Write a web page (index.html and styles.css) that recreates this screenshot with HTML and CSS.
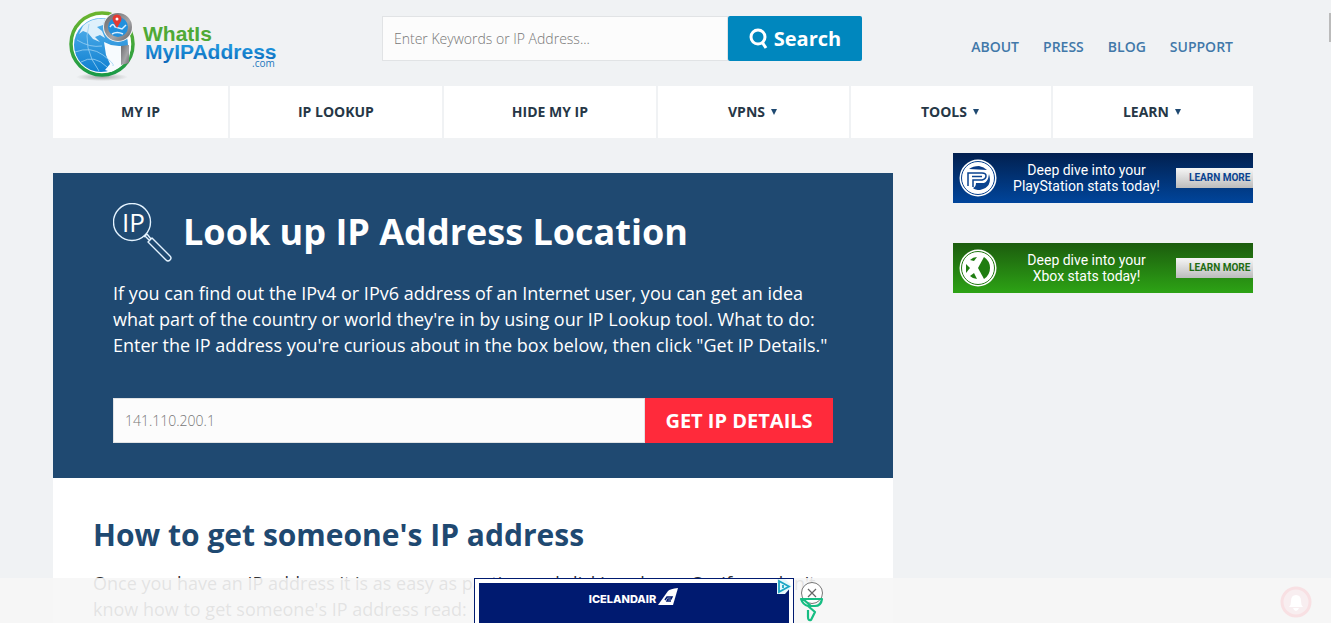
FILE: index.html
```html
<!DOCTYPE html>
<html lang="en">
<head>
<meta charset="utf-8">
<title>IP Address Lookup</title>
<link rel="stylesheet" href="styles.css">
</head>
<body>
<div class="page">
  <header class="header">
    <a class="logo" href="#" aria-label="WhatIsMyIPAddress.com">
      <svg width="210" height="74" viewBox="0 0 210 74">
        <defs>
          <linearGradient id="ring" x1="0" y1="0" x2="0" y2="1"><stop offset="0" stop-color="#6cb52e"/><stop offset="1" stop-color="#1a9a47"/></linearGradient>
          <linearGradient id="sea" x1="0" y1="0" x2="0" y2="1"><stop offset="0" stop-color="#58b4ee"/><stop offset="1" stop-color="#0f7fd0"/></linearGradient>
          <linearGradient id="steel" x1="0" y1="0" x2="1" y2="1"><stop offset="0" stop-color="#6d6d70"/><stop offset=".6" stop-color="#a5a5a8"/><stop offset="1" stop-color="#6d6d70"/></linearGradient>
          <linearGradient id="word" x1="0" y1="0" x2="0" y2="1"><stop offset=".3" stop-color="#1f95dd"/><stop offset="1" stop-color="#0a66b8"/></linearGradient>
          <radialGradient id="shade"><stop offset="0" stop-color="#888" stop-opacity=".7"/><stop offset="1" stop-color="#888" stop-opacity="0"/></radialGradient>
        </defs>
        <ellipse cx="33" cy="67" rx="26" ry="4" fill="url(#shade)"/>
        <circle cx="33" cy="34" r="31" fill="#fff" stroke="url(#ring)" stroke-width="3.5"/>
        <circle cx="32" cy="35" r="27" fill="url(#sea)"/>
        <path d="M14 16C20 10 28 8 36 9L34 15L28 17L33 21L36 28L31 25L26 27L31 32L24 29L19 23L14 21L10 24Z" fill="#eef7fd" opacity=".9"/>
        <path d="M35 32L42 35L50 36L62 36L60 48L52 56L42 62L36 60L41 54L37 45Z" fill="#f7fbfe"/>
        <path d="M6 42Q22 36 34 45T44 56M12 52Q25 44 38 57M20 14Q13 38 30 61M8 30Q21 38 33 36" fill="none" stroke="#9bd0f2" stroke-width=".8"/>
        <path d="M52 36L60 35V53L52 55Z" fill="url(#steel)"/>
        <circle cx="49" cy="17" r="15" fill="#f4f4f4"/>
        <circle cx="49" cy="17" r="12" fill="#2290dd" stroke="url(#steel)" stroke-width="4"/>
        <path d="M41 17Q44 12 46 17L53 19L57 15M43 24Q48 21 54 24" fill="none" stroke="#d9efff" stroke-width="1.500"/>
        <path d="M48 18L44 11A4.5 4.5 0 1 1 52 11Z" fill="#e53a31"/><circle cx="48" cy="9" r="1.5" fill="#fff"/>
        <text class="logo-word" x="74" y="31" fill="#4fa936">WhatIs</text>
        <text class="logo-word" x="76" y="49" fill="url(#word)">MyIPAddress</text>
        <text class="logo-com" x="183" y="57" fill="#2277bd">.com</text>
      </svg>
    </a>
    <form class="search">
      <input class="field" type="text" placeholder="Enter Keywords or IP Address..." aria-label="Search">
      <button class="search-button" type="button">
        <svg width="20" height="22" viewBox="0 0 20 22" fill="none" stroke="#fff" stroke-width="3"><circle cx="9" cy="9" r="7"/><path d="M13 14L17 20"/></svg>
        Search
      </button>
    </form>
    <nav class="links" aria-label="Site">
      <a href="#">ABOUT</a><a href="#">PRESS</a><a href="#">BLOG</a><a href="#">SUPPORT</a>
    </nav>
  </header>
  <nav class="menu" aria-label="Main">
    <a href="#">MY IP</a>
    <a href="#">IP LOOKUP</a>
    <a href="#">HIDE MY IP</a>
    <a class="has-sub" href="#">VPNS <span class="caret"></span></a>
    <a class="has-sub" href="#">TOOLS <span class="caret"></span></a>
    <a class="has-sub" href="#">LEARN <span class="caret"></span></a>
  </nav>
  <div class="columns">
    <main class="main">
      <section class="hero">
        <div class="hero-head">
          <svg width="60" height="60" viewBox="0 0 60 60" fill="none" stroke="#e4f3ff" stroke-width="1.4">
            <circle cx="19" cy="19" r="18.5"/>
            <path d="M31 34L34 31M32 33L37 38M34 31L38 36M35 39L39 35L57 53Q59 55 57 57T53 57Z" stroke-linejoin="round"/>
            <text class="lens-text" x="9" y="29" fill="#fff" stroke="none">IP</text>
          </svg>
          <h1>Look up IP Address Location</h1>
        </div>
        <p>If you can find out the IPv4 or IPv6 address of an Internet user, you can get an idea what part of the country or world they're in by using our IP Lookup tool. What to do: Enter the IP address you're curious about in the box below, then click "Get IP Details."</p>
        <form class="lookup">
          <input class="field" type="text" placeholder="141.110.200.1" aria-label="IP address">
          <button class="lookup-button" type="button">GET IP DETAILS</button>
        </form>
      </section>
      <section class="article">
        <h2>How to get someone's IP address</h2>
        <p>Once you have an IP address it is as easy as pasting and clicking above. Or, if you don't know how to get someone's IP address read:</p>
      </section>
    </main>
    <aside class="side">
      <a class="promo promo-blue" href="#">
        <svg width="38" height="38" viewBox="0 0 38 38"><circle cx="19" cy="19" r="18.5" fill="#fff"/><circle cx="19" cy="19" r="16.5" fill="none" stroke="#0a4390" stroke-width="1"/><path d="M10 10Q14 7 20 7Q25 8 28 11Z" fill="#0a3b85"/><path d="M9 27V14H23Q27 14 27 17T23 21H14V28M13 17.500H23" fill="none" stroke="#0a4390" stroke-width="1.5"/><path d="M17 24H25Q29 23 30 15Q34 28 21 31Q16 31 14 29Q17 28 17 24Z" fill="#0a4390"/></svg>
        <span class="promo-text">Deep dive into your<br>PlayStation stats today!</span>
        <span class="promo-more">LEARN MORE</span>
      </a>
      <a class="promo promo-green" href="#">
        <svg width="38" height="38" viewBox="0 0 38 38"><circle cx="19" cy="19" r="18.5" fill="#fff"/><circle cx="19" cy="19" r="16.5" fill="none" stroke="#247c14" stroke-width="1"/><g fill="#1f7d11"><path d="M19 19L25 8Q31 12 31 19T25 30Z"/><path d="M11 11Q14 8 18 8L15 12Z"/><path d="M7 15L11 19L7 24Z"/><path d="M11 27L15 24L18 30Q14 30 11 27Z"/></g></svg>
        <span class="promo-text">Deep dive into your<br>Xbox stats today!</span>
        <span class="promo-more">LEARN MORE</span>
      </a>
    </aside>
  </div>
</div>
<div class="scroll-thumb"></div>
<div class="ad-bar">
  <div class="ad">
    <a class="ad-banner" href="#">ICELANDAIR
      <svg width="21" height="18" viewBox="0 0 21 18"><path d="M0 17L10 3Q12 1 20 0L15 17Z" fill="#fff"/><path d="M7 12L9 9H14L13 11H10L9 13H13" fill="none" stroke="#001a70" stroke-width="1.5"/></svg>
    </a>
    <svg class="ad-choice" width="15" height="15" viewBox="0 0 15 15"><path d="M0 0H8L15 7L8 15H0Z" fill="#e8f8fc"/><path d="M2 2L12 7.500L2 13Z M6 6V9" fill="none" stroke="#1ba5c4" stroke-width="1.800"/></svg>
  </div>
  <button class="ad-close" type="button" aria-label="Close ad">
    <svg width="26" height="45" viewBox="0 0 26 45" fill="none"><circle cx="13" cy="15" r="10.500" fill="#fff" stroke="#777" stroke-width="1"/><path d="M9 11L17 19M17 11L9 19" stroke="#666" stroke-width="1.200"/><path d="M2 21H23Q22 28 16 28H9Q4 27 2 21ZM4 21L12 28M9 28L16 34L12 42Q9 43 9 39V32" stroke="#17bd83" stroke-width="2.200" stroke-linejoin="round"/></svg>
  </button>
</div>
<button class="bell" type="button" aria-label="Notifications">
  <svg width="32" height="32" viewBox="0 0 32 32"><circle cx="16" cy="16" r="14" fill="#f8eef0" stroke="#f8e0e3" stroke-width="3"/><path d="M9 21Q11 19 11 15Q11 9 16 9T21 15Q21 19 23 21ZM13 22H19Q18 25 16 25T13 22Z" fill="#fff"/></svg>
</button>
</body>
</html>
```
FILE: styles.css
```css
* { box-sizing: border-box; }
html { overflow: hidden; }
body {
  margin: 0;
  background: #f0f2f4;
  color: #333;
  font-family: "Open Sans", sans-serif;
  font-size: 18px;
  line-height: 26px;
}
a { text-decoration: none; }
h1, h2, p { margin: 0; }
button { border: 0; padding: 0; font: inherit; cursor: pointer; }
.page { max-width: 1306px; padding: 0 53px; height: 100vh; overflow: hidden; }
.header { display: flex; align-items: flex-start; height: 86px; padding: 10px 20px 0 16px; }
.logo { width: 313px; }
.logo svg { display: block; }
.logo-word { font: bold 21px "Liberation Sans", sans-serif; }
.logo-com { font: 10px "Open Sans", sans-serif; }
.search { display: flex; width: 480px; padding-top: 6px; }
.field {
  flex: 1;
  min-width: 0;
  height: 45px;
  padding: 0 11px;
  border: 1px solid #e1e3e5;
  border-radius: 0;
  background: #fcfcfc;
  font: 300 14px "Open Sans", sans-serif;
}
.field::placeholder { color: #777; opacity: 1; }
.search-button {
  display: flex;
  align-items: center;
  justify-content: center;
  gap: 5px;
  width: 134px;
  height: 45px;
  border-radius: 2px;
  background: #0087be;
  color: #fff;
  font-size: 20px;
  font-weight: 700;
}
.links { flex: 1; display: flex; justify-content: flex-end; gap: 24px; padding-top: 24px; }
.links a { color: #4178a9; font-size: 14px; font-weight: 600; }
.menu { display: flex; gap: 2px; }
.menu a {
  flex: 1 1 auto;
  display: flex;
  align-items: center;
  justify-content: center;
  gap: 6px;
  height: 52px;
  background: #fff;
  color: #263746;
  font-size: 14px;
  font-weight: 700;
}
.menu .has-sub { padding: 0 4px 0 2px; }
.caret { border: solid transparent; border-width: 6px 3px 0; border-top-color: #1f4971; }
.columns { display: flex; justify-content: space-between; align-items: flex-start; gap: 60px; }
.main { flex: 1; padding-top: 35px; }
.hero { padding: 30px 60px 35px; background: #1f4971; color: #fff; }
.hero-head { display: flex; gap: 10px; height: 77px; }
.lens-text { font: 26px "Open Sans", sans-serif; }
h1 { font-size: 36px; line-height: 58px; }
.lookup { display: flex; padding-top: 40px; }
.lookup-button { width: 188px; background: #ff2a3b; color: #fff; font-size: 20px; font-weight: 700; }
.article { padding: 36px 40px 40px; background: #fff; }
h2 { padding-bottom: 14px; color: #1f4971; font-size: 30px; line-height: 42px; }
.side { display: grid; gap: 40px; width: 300px; padding-top: 15px; }
.promo { display: flex; align-items: center; height: 50px; padding-left: 6px; color: #fff; }
.promo-blue { background: linear-gradient(#02204f, #00459b); }
.promo-green { background: linear-gradient(#1c5c0e, #2da315); }
.promo-text { flex: 1; font: 14px/16px Roboto, sans-serif; text-align: center; white-space: nowrap; }
.promo-more {
  width: 77px;
  padding-left: 13px;
  background: linear-gradient(#f6f6f6, #bcbcbc);
  color: #0a4390;
  font: bold 10px/20px Roboto, sans-serif;
  white-space: nowrap;
}
.promo-green .promo-more { color: #1f6d12; }
.scroll-thumb { position: fixed; top: 13px; right: 0; width: 2px; height: 29px; background: #bbb; }
.ad-bar {
  position: fixed;
  right: 0;
  bottom: 0;
  left: 0;
  display: flex;
  justify-content: center;
  gap: 5px;
  height: 45px;
  padding-right: 32px;
  background: rgba(246, 246, 246, .9);
}
.ad { position: relative; width: 320px; padding: 4px 4px 0; border: 1px solid #001a70; border-bottom: 0; background: #fff; }
.ad-banner {
  display: flex;
  justify-content: center;
  gap: 2px;
  height: 40px;
  padding-top: 5px;
  background: #001a70;
  color: #fff;
  font: 800 11px/22px Inter, sans-serif;
}
.ad-choice { position: absolute; top: 0; right: 1px; }
.ad-close { background: none; }
.ad-close svg { display: block; }
.bell { position: fixed; right: 19px; bottom: 5px; background: none; }
.bell svg { display: block; }
```
